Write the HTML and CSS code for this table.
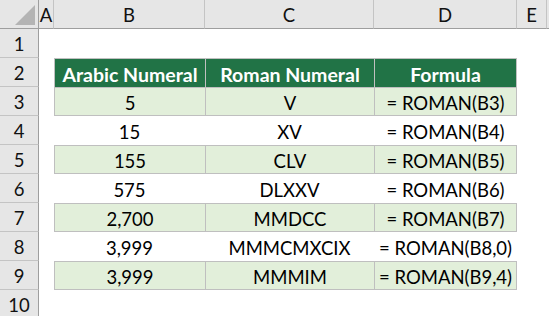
FILE: index.html
```html
<!DOCTYPE html>
<html>
<head>
<meta charset="utf-8">
<link rel="stylesheet" href="styles.css">
</head>
<body>
<div class="sheet">
  <div class="corner"><span class="tri"></span></div>
  <div class="colh">A</div>
  <div class="colh">B</div>
  <div class="colh">C</div>
  <div class="colh">D</div>
  <div class="colh">E</div>
  <div class="colh last"></div>

  <div class="rowh">1</div>
  <div class="cell"></div><div class="cell"></div><div class="cell"></div><div class="cell"></div><div class="cell"></div><div class="cell"></div>

  <div class="rowh">2</div>
  <div class="cell"></div>
  <div class="cell hd">Arabic Numeral</div>
  <div class="cell hd">Roman Numeral</div>
  <div class="cell hd lastc">Formula</div>
  <div class="cell"></div><div class="cell"></div>

  <div class="rowh">3</div>
  <div class="cell"></div>
  <div class="cell g">5</div>
  <div class="cell g">V</div>
  <div class="cell g lastc">= ROMAN(B3)</div>
  <div class="cell"></div><div class="cell"></div>

  <div class="rowh">4</div>
  <div class="cell"></div>
  <div class="cell w">15</div>
  <div class="cell w">XV</div>
  <div class="cell w">= ROMAN(B4)</div>
  <div class="cell"></div><div class="cell"></div>

  <div class="rowh">5</div>
  <div class="cell"></div>
  <div class="cell g">155</div>
  <div class="cell g">CLV</div>
  <div class="cell g lastc">= ROMAN(B5)</div>
  <div class="cell"></div><div class="cell"></div>

  <div class="rowh">6</div>
  <div class="cell"></div>
  <div class="cell w">575</div>
  <div class="cell w">DLXXV</div>
  <div class="cell w">= ROMAN(B6)</div>
  <div class="cell"></div><div class="cell"></div>

  <div class="rowh">7</div>
  <div class="cell"></div>
  <div class="cell g">2,700</div>
  <div class="cell g">MMDCC</div>
  <div class="cell g lastc">= ROMAN(B7)</div>
  <div class="cell"></div><div class="cell"></div>

  <div class="rowh">8</div>
  <div class="cell"></div>
  <div class="cell w">3,999</div>
  <div class="cell w">MMMCMXCIX</div>
  <div class="cell w">= ROMAN(B8,0)</div>
  <div class="cell"></div><div class="cell"></div>

  <div class="rowh">9</div>
  <div class="cell"></div>
  <div class="cell g">3,999</div>
  <div class="cell g">MMMIM</div>
  <div class="cell g lastc">= ROMAN(B9,4)</div>
  <div class="cell"></div><div class="cell"></div>

  <div class="rowh">10</div>
  <div class="cell"></div><div class="cell"></div><div class="cell"></div><div class="cell"></div><div class="cell"></div><div class="cell"></div>
</div>
</body>
</html>
```

FILE: styles.css
```css
* { box-sizing: border-box; }
html, body { margin: 0; padding: 0; background: #ffffff; }
body {
  font-family: Lato, "Liberation Sans", sans-serif;
  font-size: 18.5px;
  color: #000000;
  overflow: hidden;
}
.sheet {
  display: grid;
  grid-template-columns: 39px 15px 151px 169px 143px 30px 2px;
  grid-template-rows: 29px repeat(10, 29px);
  width: 549px;
}
.corner {
  position: relative;
  background: #e6e6e6;
  border-right: 1px solid #9e9e9e;
  border-bottom: 1px solid #9e9e9e;
}
.tri {
  position: absolute;
  right: 3px;
  bottom: 3px;
  width: 0;
  height: 0;
  border-left: 20px solid transparent;
  border-bottom: 20px solid #b4b4b4;
}
.colh {
  background: #e6e6e6;
  border-right: 1px solid #c4c4c4;
  border-bottom: 1px solid #9e9e9e;
  display: flex;
  align-items: center;
  justify-content: center;
  font-size: 18.5px;
  color: #111;
  padding-top: 2px;
}
.colh.last { border-right: none; }
.rowh {
  background: #e6e6e6;
  border-right: 1px solid #9e9e9e;
  border-bottom: 1px solid #c4c4c4;
  display: flex;
  align-items: center;
  justify-content: center;
  font-size: 18.5px;
  color: #111;
  padding-top: 2px;
}
.cell {
  display: flex;
  align-items: center;
  justify-content: center;
  padding-top: 3px;
  white-space: nowrap;
}
.hd {
  background: #217346;
  color: #ffffff;
  font-weight: bold;
  font-size: 19.5px;
  border-left: 1px solid #c0c0c0;
  border-top: 1px solid #c0c0c0;
}
.hd.lastc { border-right: 1px solid #c0c0c0; }
.g {
  background: #e2efda;
  border-left: 1px solid #bfbfbf;
  border-top: 1px solid #bfbfbf;
  border-bottom: 1px solid #bfbfbf;
}
.g.lastc { border-right: 1px solid #bfbfbf; }
```
